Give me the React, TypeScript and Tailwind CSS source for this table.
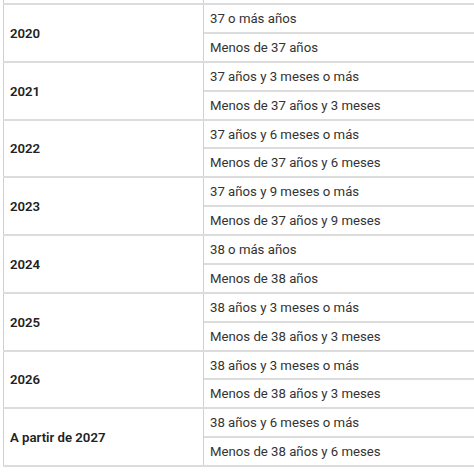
const rows = [
  { year: "2020", a: "37 o más años", b: "Menos de 37 años" },
  { year: "2021", a: "37 años y 3 meses o más", b: "Menos de 37 años y 3 meses" },
  { year: "2022", a: "37 años y 6 meses o más", b: "Menos de 37 años y 6 meses" },
  { year: "2023", a: "37 años y 9 meses o más", b: "Menos de 37 años y 9 meses" },
  { year: "2024", a: "38 o más años", b: "Menos de 38 años" },
  { year: "2025", a: "38 años y 3 meses o más", b: "Menos de 38 años y 3 meses" },
  { year: "2026", a: "38 años y 3 meses o más", b: "Menos de 38 años y 3 meses" },
  { year: "A partir de 2027", a: "38 años y 6 meses o más", b: "Menos de 38 años y 6 meses" },
];

export default function App() {
  return (
    <div
      className="w-[474px] h-[474px] overflow-hidden bg-white"
      style={{ fontFamily: "Roboto, 'Liberation Sans', sans-serif" }}
    >
      <div className="ml-[3px] w-[490px]">
        {/* tail of the previous row */}
        <div className="flex h-[5px] border-b-2 border-[#dcdcdc]">
          <div className="w-[201px] border-l-[1.5px] border-r-[1.5px] border-[#d0d0d0]" />
          <div className="flex-1" />
        </div>
        {rows.map((r) => (
          <div key={r.year} className="flex h-[57.75px] border-b-2 border-[#dcdcdc]">
            <div className="w-[201px] flex items-center pl-[6px] pt-[2px] border-l-[1.5px] border-r-[1.5px] border-[#d0d0d0] text-[13.2px] font-semibold text-[#222]">
              {r.year}
            </div>
            <div className="flex-1 flex flex-col">
              <div className="flex-1 flex items-center pl-[6px] pt-[1px] border-b-2 border-[#dcdcdc] text-[13.2px] text-[#333]">
                {r.a}
              </div>
              <div className="flex-1 flex items-center pl-[6px] pt-[1px] text-[13.2px] text-[#333]">
                {r.b}
              </div>
            </div>
          </div>
        ))}
      </div>
    </div>
  );
}
